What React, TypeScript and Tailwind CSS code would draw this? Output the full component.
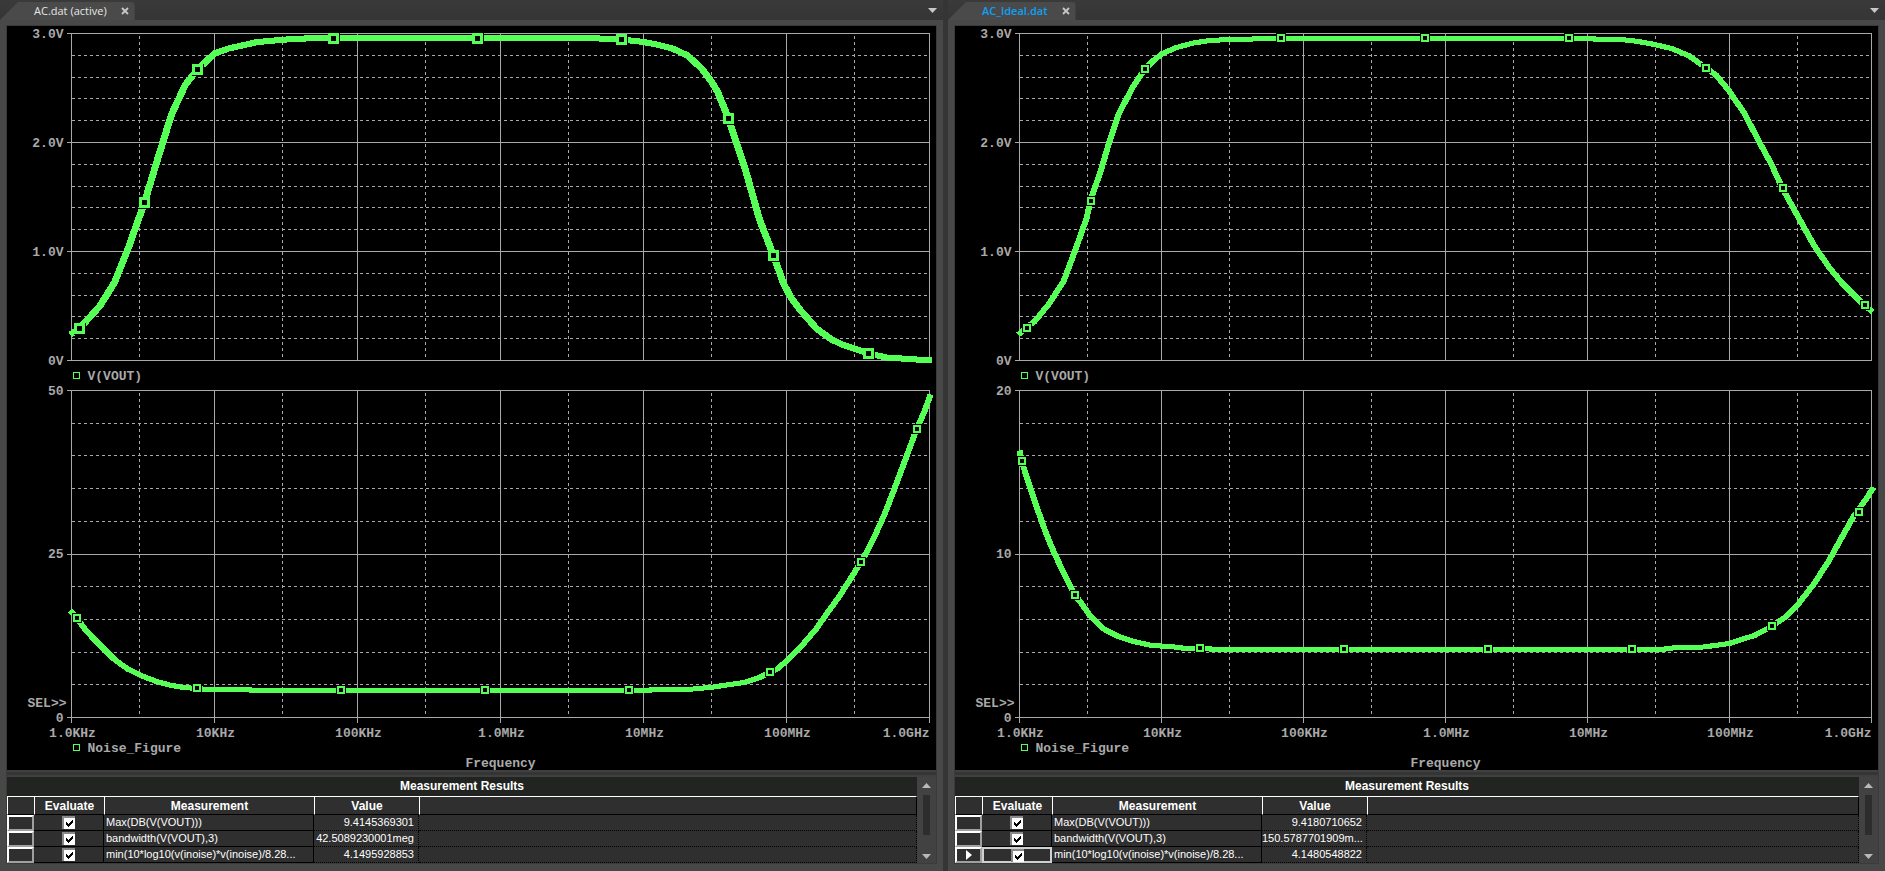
import React, { useLayoutEffect, useRef, useState } from 'react';
import clsx from 'clsx';

type Point = [number, number];

interface Trace {
  name: string;
  thick?: boolean;
  // Samples and markers live on an 858x327 (or 852x327) grid, origin top left
  gridWidth: number;
  points: Point[];
  markers: Point[];
}

interface Plot {
  labels: string[];
  minorPerMajor: number;
  selected?: boolean;
  trace: Trace;
}

interface Measurement {
  expression: string;
  value: string;
  current?: boolean;
}

interface Probe {
  file: string;
  active: boolean;
  plots: Plot[];
  measurements: Measurement[];
}

const GRID_HEIGHT = 327;
const FREQUENCIES = ['1.0KHz', '10KHz', '100KHz', '1.0MHz', '10MHz', '100MHz', '1.0GHz'];
const GRAY = '#a9a9a9';
const GREEN = '#55ff55';

const probes: Probe[] = [
  {
    file: 'AC.dat (active)',
    active: true,
    plots: [
      {
        labels: ['3.0V', '2.0V', '1.0V', '0V'],
        minorPerMajor: 5,
        trace: {
          name: 'V(VOUT)',
          thick: true,
          gridWidth: 858,
          points: [
            [-1, 301], [8, 295], [28, 273], [43, 249], [57, 214], [73, 169], [86, 126], [100, 81], [114, 51],
            [126, 36], [143, 20], [157, 15], [175, 11], [186, 8.5], [215, 6], [243, 4.5], [514, 4.5], [541, 5.5],
            [550, 6], [572, 8.5], [585, 11], [601, 15], [616, 22], [630, 35], [640, 48], [646, 58], [657, 85],
            [665, 109], [675, 140], [688, 186], [702, 222], [712, 250], [720, 265], [730, 278], [745, 295],
            [760, 306], [773, 312], [788, 317], [797, 320], [815, 324], [830, 325], [845, 326], [860, 327],
          ],
          markers: [[8, 295], [73, 169], [126, 36], [262, 5], [406, 5], [550, 6], [657, 85], [702, 222], [797, 320]],
        },
      },
      {
        labels: ['50', '25', '0'],
        minorPerMajor: 5,
        selected: true,
        trace: {
          name: 'Noise_Figure',
          gridWidth: 858,
          points: [
            [-1, 220], [5, 227], [13, 238], [20, 246], [32, 258], [43, 269], [57, 279], [72, 286], [85, 291],
            [98, 294.5], [112, 297], [125, 298], [137, 299], [178, 299], [180, 300], [578, 300], [580, 299],
            [622, 298.5], [642, 296.5], [658, 294], [673, 292], [687, 287.5], [698, 282], [705, 279], [715, 270.5],
            [730, 255.5], [745, 238], [755, 223.5], [767, 207], [778, 190], [789, 172], [795, 162], [803, 146],
            [813, 124], [823, 98], [835, 66], [845, 39], [853, 21], [859, 4],
          ],
          markers: [[5, 227], [125, 297], [269, 299], [413, 299], [557, 299], [698, 281], [789, 171], [845, 38]],
        },
      },
    ],
    measurements: [
      { expression: 'Max(DB(V(VOUT)))', value: '9.4145369301' },
      { expression: 'bandwidth(V(VOUT),3)', value: '42.5089230001meg' },
      { expression: 'min(10*log10(v(inoise)*v(inoise)/8.28...', value: '4.1495928853' },
    ],
  },
  {
    file: 'AC_Ideal.dat',
    active: false,
    plots: [
      {
        labels: ['3.0V', '2.0V', '1.0V', '0V'],
        minorPerMajor: 5,
        trace: {
          name: 'V(VOUT)',
          gridWidth: 852,
          points: [
            [-1, 301], [7, 294], [15, 288], [29, 271], [44, 248], [56, 216], [67, 185], [71, 167], [82, 135],
            [89, 111], [99, 81], [113, 54], [125, 36], [134, 27], [143, 20], [157, 14], [174, 9.5], [187, 7.5],
            [207, 6], [234, 5.5], [235, 5], [574, 5], [576, 6], [602, 6], [619, 8], [635, 11], [652, 15], [669, 22],
            [686, 34], [697, 42], [710, 58], [725, 80], [739, 107], [752, 131], [763, 155], [779, 184], [794, 211],
            [809, 233], [822, 249], [839, 266], [845, 272], [853, 278],
          ],
          markers: [[7, 294], [71, 167], [125, 35], [261, 4], [405, 4], [549, 4], [686, 34], [763, 154], [845, 271]],
        },
      },
      {
        labels: ['20', '10', '0'],
        minorPerMajor: 5,
        selected: true,
        trace: {
          name: 'Noise_Figure',
          gridWidth: 852,
          points: [
            [0, 60], [2, 70], [7, 86], [17, 116], [27, 144], [35, 163], [43, 180], [55, 204], [62, 213], [72, 227],
            [85, 239], [99, 246], [114, 251], [130, 254.5], [147, 256], [162, 257], [163, 258], [190, 258],
            [192, 259], [644, 259], [647, 258], [659, 257], [684, 256.5], [710, 253], [722, 249], [735, 245],
            [752, 236], [767, 226], [780, 212], [794, 194], [809, 171], [820, 151], [834, 126], [847, 108], [854, 97],
          ],
          markers: [[2, 70], [55, 204], [180, 257], [324, 258], [468, 258], [612, 258], [752, 235], [839, 121]],
        },
      },
    ],
    measurements: [
      { expression: 'Max(DB(V(VOUT)))', value: '9.4180710652' },
      { expression: 'bandwidth(V(VOUT),3)', value: '150.5787701909m...' },
      { expression: 'min(10*log10(v(inoise)*v(inoise)/8.28...', value: '4.1480548822', current: true },
    ],
  },
];

const PlotArea: React.FC<{ plot: Plot; left: number; top: number; decade: number; height: number; last: boolean }> = ({
  plot,
  left,
  top,
  decade,
  height,
  last,
}) => {
  const { trace, labels } = plot;
  const width = decade * (FREQUENCIES.length - 1);
  const right = left + width;
  const bottom = top + height;
  const majors = labels.length - 1;
  const rows = majors * plot.minorPerMajor;
  const sx = width / trace.gridWidth;
  const sy = height / GRID_HEIGHT;
  const place = ([x, y]: Point): Point => [left + x * sx, top + y * sy];
  const legendY = last ? bottom + 31 : bottom + 16;
  const size = trace.thick ? 8 : 6;
  const stroke = trace.thick ? 3 : 2;

  return (
    <g>
      {/* Grid */}
      <g stroke={GRAY} shapeRendering="crispEdges">
        {Array.from({ length: rows + 1 }, (_, i) => {
          const y = top + Math.round((height * i) / rows);
          const major = i % plot.minorPerMajor === 0;
          return (
            <line
              key={i}
              x1={major ? left - 5 : left}
              x2={right}
              y1={y}
              y2={y}
              strokeDasharray={major ? undefined : '3 3'}
            />
          );
        })}
        {FREQUENCIES.map((f, i) => {
          const x = left + i * decade;
          const minor = x + Math.round(decade * Math.log10(3));
          return (
            <g key={f}>
              <line x1={x} x2={x} y1={top} y2={last ? bottom + 5 : bottom} />
              {i < FREQUENCIES.length - 1 && (
                <line x1={minor} x2={minor} y1={top + 2} y2={bottom} strokeDasharray="3 3" />
              )}
            </g>
          );
        })}
      </g>

      {/* Trace: two passes side by side, so that steep parts get a wider pen */}
      <g shapeRendering="crispEdges" fill="none" stroke={GREEN}>
        {[-0.5, 0.5].map((dx) => (
          <polyline
            key={dx}
            points={trace.points.map(place).map(([x, y]) => `${x + dx},${y}`).join(' ')}
            strokeWidth={trace.thick ? 6 : 5}
            strokeLinejoin="round"
          />
        ))}
        {trace.markers.map((m, i) => {
          const [x, y] = place(m).map((v) => Math.floor(v) + 0.5);
          const c = trace.thick ? 0 : 0.5;
          return (
            <g key={i}>
              <rect x={x + c - size / 2 - 2} y={y + c - size / 2 - 2} width={size + 4} height={size + 4} fill="black" stroke="none" />
              <rect x={x + c - size / 2} y={y + c - size / 2} width={size} height={size} fill="black" strokeWidth={stroke} />
            </g>
          );
        })}
        <rect x={left + 2} y={legendY - 4} width={6} height={6} />
      </g>

      {/* Labels */}
      <g fill={GRAY}>
        {labels.map((label, i) => (
          <text key={label} x={left - 8} y={top + (height * i) / majors + 4} textAnchor="end">
            {label}
          </text>
        ))}
        {plot.selected && (
          <text x={left - 5} y={bottom - 11} textAnchor="end">
            SEL&gt;&gt;
          </text>
        )}
        <text x={left + 16} y={legendY + 3}>
          {trace.name}
        </text>
      </g>
    </g>
  );
};

const ProbeChart: React.FC<{ plots: Plot[] }> = ({ plots }) => {
  const ref = useRef<HTMLDivElement>(null);
  const [box, setBox] = useState({ width: 0, height: 0 });

  useLayoutEffect(() => {
    const el = ref.current;
    if (!el) return;
    const measure = () => setBox({ width: el.clientWidth, height: el.clientHeight });
    measure();
    const observer = new ResizeObserver(measure);
    observer.observe(el);
    return () => observer.disconnect();
  }, []);

  const left = 64.5;
  const decade = Math.max(1, Math.floor((box.width - 69) / 6));
  const height = Math.max(1, Math.floor((box.height - 90) / 2));
  const axisY = 7.5 + height * 2 + 30;

  return (
    <div ref={ref} className="min-h-0 flex-1 overflow-hidden bg-black">
      {box.width > 0 && (
        <svg
          width={box.width}
          height={box.height}
          className="block font-['Liberation_Mono',monospace] text-[13px] font-bold"
          role="img"
          aria-label="Frequency response"
        >
          {plots.map((plot, i) => (
            <PlotArea
              key={plot.trace.name}
              plot={plot}
              left={left}
              top={7.5 + i * (height + 30)}
              decade={decade}
              height={height}
              last={i === plots.length - 1}
            />
          ))}
          <g fill={GRAY} textAnchor="middle">
            {FREQUENCIES.map((f, i) => {
              const end = i === FREQUENCIES.length - 1;
              return (
                <text key={f} x={left + i * decade + (end ? 0 : 1)} y={axisY + 19} textAnchor={end ? 'end' : 'middle'}>
                  {f}
                </text>
              );
            })}
            <text x={left + decade * 3} y={axisY + 49}>
              Frequency
            </text>
          </g>
        </svg>
      )}
    </div>
  );
};

const ScrollBar: React.FC = () => (
  <div className="flex w-[19px] shrink-0 flex-col items-center bg-[#424242] pt-1.5 pb-1">
    <button type="button" aria-label="Scroll up" className="flex h-3 items-start">
      <svg width="9" height="5" className="block">
        <path d="M0 5 4.5 0 9 5Z" fill="#b9b9b9" />
      </svg>
    </button>
    <div className="h-10 w-[7px] bg-[#2d2d2d]" />
    <button type="button" aria-label="Scroll down" className="mt-auto">
      <svg width="9" height="5" className="block">
        <path d="M0 0 4.5 5 9 0Z" fill="#b9b9b9" />
      </svg>
    </button>
  </div>
);

const EvaluateBox: React.FC<{ label: string }> = ({ label }) => (
  <div className="relative mx-auto h-[13px] w-[13px]">
    <input
      type="checkbox"
      defaultChecked
      aria-label={`Evaluate ${label}`}
      className="peer block h-[13px] w-[13px] appearance-none border-t-2 border-l-2 border-[#8a8a8a] bg-white"
    />
    <svg viewBox="0 0 13 13" className="pointer-events-none absolute inset-0 hidden peer-checked:block" shapeRendering="crispEdges">
      <path d="M4 6 6 8 11 3V6L6 11 4 9Z" fill="black" />
    </svg>
  </div>
);

const MeasurementResults: React.FC<{ rows: Measurement[] }> = ({ rows }) => {
  const header = 'h-[19px] border-t border-l border-t-white border-l-white border-b border-b-black p-0 text-xs leading-4';
  const cell = 'h-4 border-b border-black p-0 leading-[15px]';

  return (
    <div className="flex shrink-0 bg-[#2f2f2f] font-['Liberation_Sans',Arial,sans-serif] text-[11px] text-white">
      <div className="min-w-0 flex-1">
        <h2 className="h-[19px] bg-[#222421] text-center text-xs leading-[19px] font-bold">Measurement Results</h2>
        <table className="w-full table-fixed border-separate border-spacing-0">
          <colgroup>
            <col className="w-[27px]" />
            <col className="w-[70px]" />
            <col className="w-[210px]" />
            <col className="w-[105px]" />
            <col />
          </colgroup>
          <thead>
            <tr>
              <th className={header} aria-label="Row" />
              <th className={header}>Evaluate</th>
              <th className={header}>Measurement</th>
              <th className={header}>Value</th>
              <th className={clsx(header, 'border-r border-r-black')} aria-label="Notes" />
            </tr>
          </thead>
          <tbody>
            {rows.map((row) => (
              <tr key={row.expression}>
                <td className="h-4 border-2 border-t-white border-r-[#a0a0a0] border-b-[#a0a0a0] border-l-white p-0">
                  {row.current && (
                    <svg width="6" height="10" className="mx-auto block">
                      <path d="M0 0 6 5 0 10Z" fill="white" />
                    </svg>
                  )}
                </td>
                <td className={clsx('h-4 p-0', row.current ? 'border-2 border-[#d0d0d0]' : 'border-r border-b border-black')}>
                  <div className="flex h-3 items-center">
                    <EvaluateBox label={row.expression} />
                  </div>
                </td>
                <td className={clsx(cell, 'truncate border-r pl-0.5')}>{row.expression}</td>
                <td className={clsx(cell, 'border-r border-dotted pr-1 text-right whitespace-nowrap')}>{row.value}</td>
                <td className={clsx(cell, 'border-r border-dotted')} />
              </tr>
            ))}
          </tbody>
        </table>
      </div>
      <ScrollBar />
    </div>
  );
};

const ProbeWindow: React.FC<{ probe: Probe }> = ({ probe }) => (
  <section className="flex min-w-0 flex-col">
    {/* Tab strip */}
    <div className="flex h-5 shrink-0 items-end justify-between bg-gradient-to-b from-[#3a3a3a] to-[#353535]">
      <div className="flex h-[18px] items-center gap-3.5 rounded-tr-sm bg-[#4a4a4a] pr-1.5 pl-[34px] [clip-path:polygon(18px_0,100%_0,100%_100%,0_100%)]">
        <span
          className={clsx(
            "font-['Open_Sans',sans-serif] text-[11px] leading-[18px] whitespace-nowrap",
            probe.active ? 'text-[#e6e6e6]' : 'font-semibold text-[#0fa0f5]'
          )}
        >
          {probe.file}
        </span>
        <button type="button" aria-label={`Close ${probe.file}`}>
          <svg width="8" height="8" viewBox="0 0 8 8" className="block">
            <path d="M1 1 7 7M7 1 1 7" stroke="#c8c8c8" strokeWidth="1.8" />
          </svg>
        </button>
      </div>
      <button type="button" aria-label="Open windows" className="mr-1.5 self-center">
        <svg width="9" height="5" className="block">
          <path d="M0 0 4.5 5 9 0Z" fill="#c8c8c8" />
        </svg>
      </button>
    </div>

    {/* Framed content */}
    <div className="flex min-h-0 flex-1 flex-col bg-[#484848] px-1.5 pt-[5px] pb-[7px]">
      <div className="flex min-h-0 flex-1 flex-col border border-[#3b3b3b]">
        <ProbeChart plots={probe.plots} />
        <div className="h-[7px] shrink-0 border-y-2 border-[#404040] bg-[#353535]" />
        <MeasurementResults rows={probe.measurements} />
      </div>
    </div>
  </section>
);

export default function App() {
  return (
    <main className="grid h-screen min-h-[480px] grid-cols-[943fr_937fr] gap-[5px] bg-[#353535]">
      {probes.map((probe) => (
        <ProbeWindow key={probe.file} probe={probe} />
      ))}
    </main>
  );
}
